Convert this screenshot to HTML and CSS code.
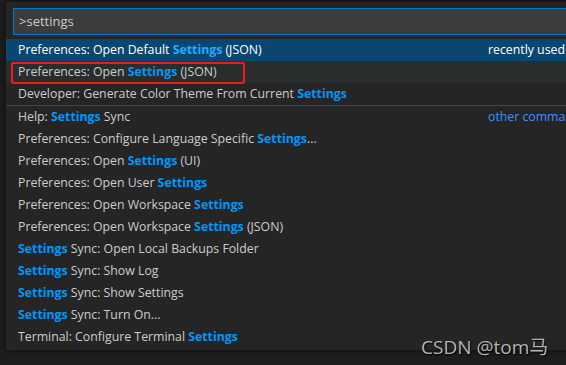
FILE: index.html
```html
<!DOCTYPE html>
<html lang="en">
<head>
    <meta charset="UTF-8">
    <title>Command Palette</title>
    <link rel="stylesheet" href="styles.css">
</head>
<body>
    <div class="palette">
        <div class="input-wrap">
            <div class="input">&gt;settings</div>
        </div>
        <ul class="list">
            <li class="row selected">
                <span class="label">Preferences: Open Default <b>Settings</b> (JSON)</span>
                <span class="tag">recently used</span>
            </li>
            <li class="row hover">
                <span class="label">Preferences: Open <b>Settings</b> (JSON)</span>
            </li>
            <li class="row">
                <span class="label">Developer: Generate Color Theme From Current <b>Settings</b></span>
            </li>
            <li class="row sep">
                <span class="label">Help: <b>Settings</b> Sync</span>
                <span class="tag other">other commands</span>
            </li>
            <li class="row"><span class="label">Preferences: Configure Language Specific <b>Settings</b>...</span></li>
            <li class="row"><span class="label">Preferences: Open <b>Settings</b> (UI)</span></li>
            <li class="row"><span class="label">Preferences: Open User <b>Settings</b></span></li>
            <li class="row"><span class="label">Preferences: Open Workspace <b>Settings</b></span></li>
            <li class="row"><span class="label">Preferences: Open Workspace <b>Settings</b> (JSON)</span></li>
            <li class="row"><span class="label"><b>Settings</b> Sync: Open Local Backups Folder</span></li>
            <li class="row"><span class="label"><b>Settings</b> Sync: Show Log</span></li>
            <li class="row"><span class="label"><b>Settings</b> Sync: Show Settings</span></li>
            <li class="row"><span class="label"><b>Settings</b> Sync: Turn On...</span></li>
            <li class="row"><span class="label">Terminal: Configure Terminal <b>Settings</b></span></li>
        </ul>
    </div>
    <div class="mark"></div>
    <div class="watermark">CSDN @tom马</div>
</body>
</html>
```

FILE: styles.css
```css
body {
    margin: 0;
    background: #1e1e1e;
    font-family: 'Open Sans', 'Noto Sans CJK SC', sans-serif;
    font-size: 12.3px;
    color: #cccccc;
    height: 365px;
    overflow: hidden;
    position: relative;
}
.palette {
    margin: 2px 0 0 6px;
    width: 620px;
    height: 348px;
    background: #252526;
    box-shadow: 0 0 8px rgba(0, 0, 0, 0.6);
}
.input-wrap {
    padding: 6px 0 0 7px;
}
.input {
    height: 25px;
    line-height: 25px;
    border: 1px solid #007acc;
    background: #3c3c3c;
    padding-left: 5px;
    font-size: 13px;
    color: #cccccc;
}
.list {
    list-style: none;
    margin: 4px 0 0;
    padding: 0;
}
.row {
    height: 22px;
    line-height: 22px;
    padding-left: 12px;
    display: flex;
    white-space: nowrap;
}
.row b {
    color: #0097fb;
    font-weight: 700;
}
.row .label {
    width: 470px;
}
.selected {
    background: #094771;
    color: #ffffff;
}
.selected b {
    color: #2aaaff;
}
.hover {
    background: #2a2d2e;
}
.sep {
    border-top: 1px solid #454545;
}
.tag {
    color: #ffffff;
}
.tag.other {
    color: #3794ff;
}
.mark {
    position: absolute;
    left: 11px;
    top: 62px;
    width: 230px;
    height: 18px;
    border: 2px solid #f21a1a;
    border-radius: 2px;
}
.watermark {
    position: absolute;
    left: 421px;
    top: 332px;
    font-size: 19px;
    color: #b4b4b4;
    text-shadow: 1px 1px 1px #000000;
}
```
